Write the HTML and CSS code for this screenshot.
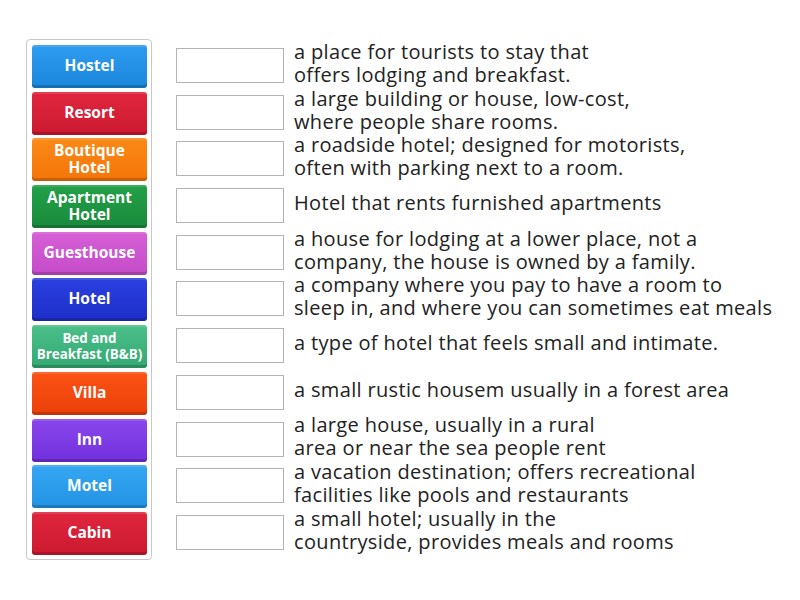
FILE: index.html
```html
<html>

<head>
    <meta name="viewport" content="width=device-width, initial-scale=1.0">
    <meta charset="UTF-8">
    <title>Match up</title>
    <link rel="stylesheet" href="styles.css">
</head>

<body>
    <div id="board">
        <div id="tiles">
            <div class="tile blue">Hostel</div>
            <div class="tile red">Resort</div>
            <div class="tile orange">Boutique Hotel</div>
            <div class="tile green">Apartment Hotel</div>
            <div class="tile pink">Guesthouse</div>
            <div class="tile navy">Hotel</div>
            <div class="tile teal small">Bed and Breakfast (B&amp;B)</div>
            <div class="tile vermilion">Villa</div>
            <div class="tile purple">Inn</div>
            <div class="tile sky">Motel</div>
            <div class="tile red">Cabin</div>
        </div>
        <div id="targets">
            <div class="row"><div class="slot"></div><div class="def">a place for tourists to stay that<br>offers lodging and breakfast.</div></div>
            <div class="row"><div class="slot"></div><div class="def">a large building or house, low-cost,<br>where people share rooms.</div></div>
            <div class="row"><div class="slot"></div><div class="def">a roadside hotel; designed for motorists,<br>often with parking next to a room.</div></div>
            <div class="row"><div class="slot"></div><div class="def">Hotel that rents furnished apartments</div></div>
            <div class="row"><div class="slot"></div><div class="def">a house for lodging at a lower place, not a<br>company, the house is owned by a family.</div></div>
            <div class="row"><div class="slot"></div><div class="def">a company where you pay to have a room to<br>sleep in, and where you can sometimes eat meals</div></div>
            <div class="row"><div class="slot"></div><div class="def">a type of hotel that feels small and intimate.</div></div>
            <div class="row"><div class="slot"></div><div class="def">a small rustic housem usually in a forest area</div></div>
            <div class="row"><div class="slot"></div><div class="def">a large house, usually in a rural<br>area or near the sea people rent</div></div>
            <div class="row"><div class="slot"></div><div class="def">a vacation destination; offers recreational<br>facilities like pools and restaurants</div></div>
            <div class="row"><div class="slot"></div><div class="def">a small hotel; usually in the<br>countryside, provides meals and rooms</div></div>
        </div>
    </div>
</body>

</html>
```

FILE: styles.css
```css
body {
    margin: 0;
    background: #fff;
    font-family: "Open Sans", Arial, sans-serif;
}

#board {
    display: flex;
    align-items: flex-start;
    padding-top: 39px;
    padding-left: 26px;
}

#tiles {
    display: flex;
    flex-direction: column;
    gap: 3.7px;
    padding: 5px 4px 4px 5px;
    border: 1px solid #c8c8c8;
    border-radius: 4px;
}

.tile {
    width: 115px;
    height: 43px;
    box-sizing: border-box;
    display: flex;
    align-items: center;
    justify-content: center;
    text-align: center;
    color: #fff;
    font-weight: bold;
    font-size: 15.5px;
    line-height: 17px;
    border-radius: 3px;
    box-shadow: inset 0 -3px 0 rgba(0, 0, 0, 0.18), inset 0 2px 0 rgba(255, 255, 255, 0.12);
    padding: 0 8px 2px;
}

.tile.small {
    font-size: 13.4px;
    line-height: 16px;
    padding: 0 2px 2px;
}

.blue {
    background: linear-gradient(#2e9cf0, #1a86dc);
}

.red {
    background: linear-gradient(#e0263e, #cc1a30);
}

.orange {
    background: linear-gradient(#fb8a18, #f47508);
}

.green {
    background: linear-gradient(#22a048, #1a8a3c);
}

.pink {
    background: linear-gradient(#d65ed6, #c44cc8);
}

.navy {
    background: linear-gradient(#2a40e0, #1e2ec8);
}

.teal {
    background: linear-gradient(#4cc08a, #34a872);
}

.vermilion {
    background: linear-gradient(#fc5214, #ec400a);
}

.purple {
    background: linear-gradient(#8a46ec, #7030dc);
}

.sky {
    background: linear-gradient(#34a6f2, #2294e4);
}

#targets {
    display: flex;
    flex-direction: column;
    gap: 3.7px;
    margin-top: 6px;
    margin-left: 24px;
}

.row {
    height: 43px;
    display: flex;
    align-items: center;
}

.slot {
    width: 106px;
    height: 33px;
    border: 1px solid #b4b4b4;
    background: #fff;
    flex-shrink: 0;
    margin-bottom: 2px;
}

.def {
    margin-left: 10px;
    margin-bottom: 7.4px;
    font-size: 20px;
    letter-spacing: 0.34px;
    line-height: 23px;
    color: #222;
    white-space: nowrap;
}
```
